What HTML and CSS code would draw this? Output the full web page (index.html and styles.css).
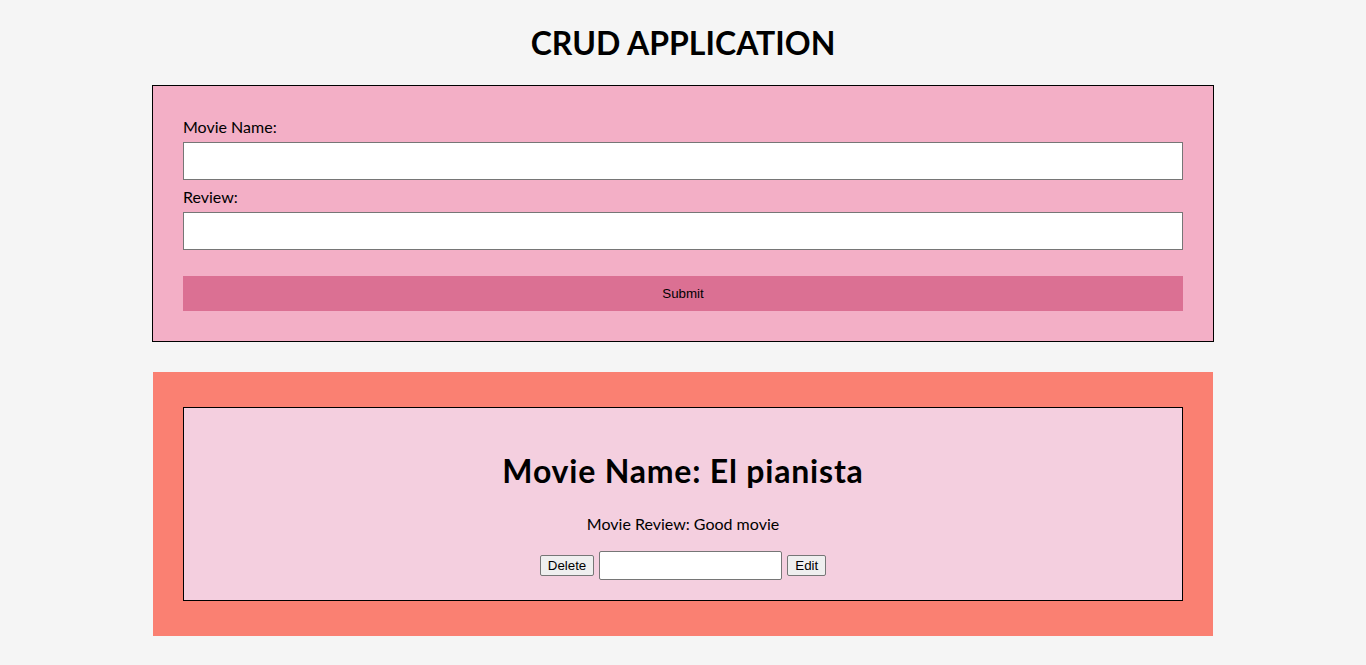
FILE: index.html
```html
<!DOCTYPE html>
<html lang="en">
<head>
<meta charset="utf-8">
<title>CRUD Application</title>
<link rel="stylesheet" href="styles.css">
</head>
<body>
  <h1 class="title">CRUD APPLICATION</h1>
  <form class="form-box">
    <label class="field-label" for="movieName">Movie Name:</label>
    <input class="field-input" id="movieName" type="text">
    <label class="field-label" for="review">Review:</label>
    <input class="field-input" id="review" type="text">
    <button class="submit-btn" type="button">Submit</button>
  </form>
  <section class="list-box">
    <div class="card">
      <h1 class="card-title">Movie Name: El pianista</h1>
      <p class="card-review">Movie Review: Good movie</p>
      <div class="card-actions">
        <button class="small-btn" type="button">Delete</button>
        <input class="edit-input" type="text">
        <button class="small-btn" type="button">Edit</button>
      </div>
    </div>
  </section>
</body>
</html>
```

FILE: styles.css
```css
html, body {
  margin: 0;
  padding: 0;
}
body {
  background: #f5f5f5;
  font-family: "Lato", "Noto Sans", sans-serif;
  color: #000;
  display: flex;
  flex-direction: column;
  align-items: center;
}
.title {
  font-size: 32px;
  font-weight: 700;
  line-height: 43px;
  margin: 21px 0 21px;
  text-align: center;
}
.form-box {
  width: 1000px;
  padding: 30px;
  border: 1px solid #000;
  background: #f3afc6;
  display: flex;
  flex-direction: column;
}
.field-label {
  font-size: 16px;
  line-height: 22px;
  margin-bottom: 4px;
}
.field-input {
  box-sizing: border-box;
  width: 1000px;
  height: 38px;
  margin: 0 0 6px;
  border: 1px solid #767676;
  border-radius: 0;
  background: #fff;
}
.field-input + .submit-btn {
  margin-top: 20px;
}
.submit-btn {
  height: 35px;
  border: none;
  background: #db7093;
  font-family: "Liberation Sans", Arial, sans-serif;
  font-size: 13.33px;
  color: #000;
}
.list-box {
  margin-top: 30px;
  width: 1000px;
  padding: 35px 30px;
  background: #fa8072;
}
.card {
  box-sizing: border-box;
  width: 1000px;
  border: 1px solid #000;
  background: #f4cfdf;
  padding: 20px 0 20px;
  text-align: center;
}
.card-title {
  font-size: 32px;
  font-weight: 700;
  line-height: 43px;
  letter-spacing: 0.8px;
  margin: 21px 0;
}
.card-review {
  font-size: 16px;
  line-height: 22px;
  margin: 0 0 16px;
}
.card-actions {
  display: flex;
  justify-content: center;
  align-items: center;
  gap: 5px;
}
.small-btn {
  font-family: "Liberation Sans", Arial, sans-serif;
  font-size: 13.33px;
  height: 21px;
  padding: 1px 7px;
  border: 1px solid #767676;
  border-radius: 2px;
  background: #efefef;
  color: #000;
}
.edit-input {
  box-sizing: border-box;
  width: 183px;
  height: 29px;
  border: 1px solid #767676;
  border-radius: 2px;
  background: #fff;
}
```
